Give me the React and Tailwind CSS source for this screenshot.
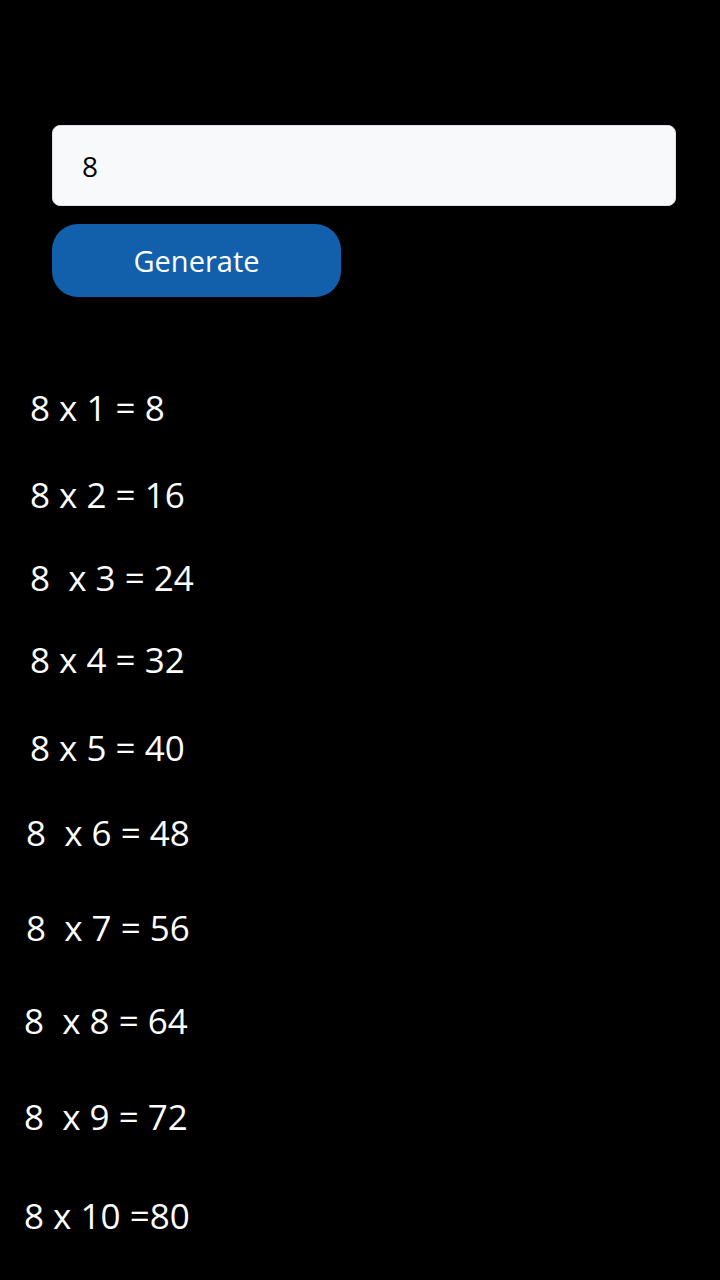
import { useState } from "react";

const rows = [
  { text: "8 x 1 = 8", cls: "mt-[91px] pl-[30px]" },
  { text: "8 x 2 = 16", cls: "mt-[47px] pl-[30px]" },
  { text: "8  x 3 = 24", cls: "mt-[43px] pl-[30px]" },
  { text: "8 x 4 = 32", cls: "mt-[42px] pl-[30px]" },
  { text: "8 x 5 = 40", cls: "mt-[48px] pl-[30px]" },
  { text: "8  x 6 = 48", cls: "mt-[45px] pl-[26px]" },
  { text: "8  x 7 = 56", cls: "mt-[55px] pl-[26px]" },
  { text: "8  x 8 = 64", cls: "mt-[53px] pl-[24px]" },
  { text: "8  x 9 = 72", cls: "mt-[56px] pl-[24px]" },
  { text: "8 x 10 =80", cls: "mt-[59px] pl-[24px]" },
];

function App() {
  const [num, setNum] = useState("8");

  return (
    <div
      className="min-h-screen bg-black text-white pt-[125px]"
      style={{ fontFamily: '"Open Sans", "Noto Sans", sans-serif' }}
    >
      <div className="pl-[52px] pr-[44px] flex flex-col gap-[18px]">
        <input
          value={num}
          onChange={(e) => setNum(e.target.value)}
          className="w-full h-[81px] rounded-lg bg-[#f8f9fa] border border-[#dee2e6] px-[29px] text-[28px] text-black outline-none"
        />
        <button className="w-[289px] h-[73px] rounded-[26px] bg-[#1260ac] text-white text-[29px]">
          Generate
        </button>
      </div>

      <div className="flex flex-col pb-[40px]">
        {rows.map((row, key) => (
          <p
            key={key}
            className={`${row.cls} text-[35px] leading-[40px] whitespace-pre`}
          >
            {row.text}
          </p>
        ))}
      </div>
    </div>
  );
}

export default App;
